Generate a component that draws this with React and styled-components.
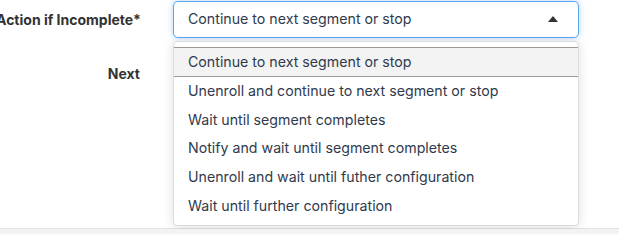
import React from 'react';
import styled, { createGlobalStyle } from 'styled-components';

const GlobalStyle = createGlobalStyle`
  html, body {
    margin: 0;
    padding: 0;
    background: #f3f3f6;
    font-family: 'Inter', 'Liberation Sans', sans-serif;
  }
`;

const options = [
  'Continue to next segment or stop',
  'Unenroll and continue to next segment or stop',
  'Wait until segment completes',
  'Notify and wait until segment completes',
  'Unenroll and wait until futher configuration',
  'Wait until further configuration',
];

const Page = styled.div`
  background: #fff;
  height: 227px;
  border-bottom: 1px solid #e2e2e6;
  padding-top: 1px;
  box-sizing: content-box;
`;

const Row = styled.div`
  display: grid;
  grid-template-columns: 140px 406px;
  column-gap: 33px;
  align-items: center;
  margin-top: ${(p) => p.$top || 0}px;
`;

const Label = styled.label`
  text-align: right;
  font-weight: 700;
  font-size: 14px;
  color: #333;
  white-space: nowrap;
  margin-left: -4px;
`;

const Field = styled.div`
  position: relative;
  height: ${(p) => p.$height || 37}px;
`;

const Select = styled.div`
  box-sizing: border-box;
  height: 37px;
  border: 1px solid #5ea6ea;
  border-radius: 5px;
  box-shadow: 0 0 6px rgba(110, 175, 240, 0.55);
  display: flex;
  align-items: center;
  justify-content: space-between;
  padding: 0 20px 2px 14px;
  font-size: 14.2px;
  color: #2f3a4c;
  background: #fff;
`;

const Caret = styled.span`
  width: 0;
  height: 0;
  border-left: 5px solid transparent;
  border-right: 5px solid transparent;
  border-bottom: 6px solid #333;
`;

const Menu = styled.ul`
  position: absolute;
  top: 40px;
  left: 0;
  right: 0;
  margin: 0;
  padding: 5px 0 4px;
  list-style: none;
  background: #fff;
  border: 1px solid #dcdcdc;
  border-radius: 4px;
  box-shadow: 0 2px 12px rgba(0, 0, 0, 0.12);
  z-index: 2;
`;

const Option = styled.li`
  box-sizing: border-box;
  height: ${(p) => (p.$active ? 30 : 28.8)}px;
  display: flex;
  align-items: center;
  padding: 0 0 2px 14px;
  font-size: 14.2px;
  color: #2f3a4c;
  background: ${(p) => (p.$active ? '#f3f3f3' : 'transparent')};
  border-top: 1px solid ${(p) => (p.$active ? '#9a9a9a' : 'transparent')};
  border-bottom: 1px solid ${(p) => (p.$active ? '#9a9a9a' : 'transparent')};
  white-space: nowrap;
`;

export default function App() {
  return (
    <>
      <GlobalStyle />
      <Page>
        <Row>
          <Label>Action if Incomplete*</Label>
          <Field>
            <Select>
              <span>{options[0]}</span>
              <Caret />
            </Select>
            <Menu>
              {options.map((o, i) => (
                <Option key={o} $active={i === 0}>
                  {o}
                </Option>
              ))}
            </Menu>
          </Field>
        </Row>
        <Row $top={24}>
          <Label>Next</Label>
          <Field $height={22} />
        </Row>
      </Page>
    </>
  );
}
